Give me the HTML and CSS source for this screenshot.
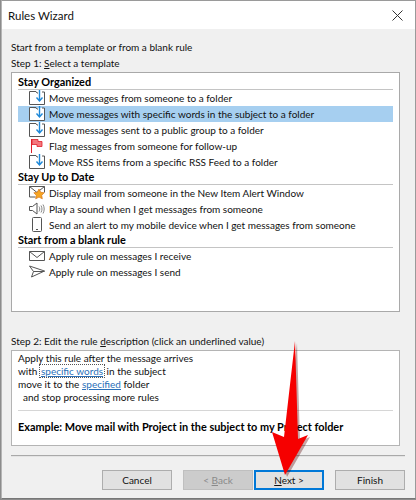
FILE: index.html
```html
<!DOCTYPE html>
<html lang="en">
<head>
    <meta charset="UTF-8">
    <meta name="viewport" content="width=device-width, initial-scale=1.0">
    <title>Rules Wizard</title>
    <link rel="stylesheet" href="styles.css">
</head>
<body>
    <svg width="0" height="0" class="defs">
        <defs>
            <g id="folderMove">
                <path d="M0.500 1.500h6.500l1 1.500h1M0.500 1.500v13h15v-12.500h-2.500" fill="#fff" stroke="#555"/>
                <path d="M10.500 0v10.500M7.500 7.500l3 3.500 3-3.500" fill="none" stroke="#1e88d8" stroke-width="1.400"/>
            </g>
        </defs>
    </svg>

    <div class="window">
        <div class="title-bar">
            <span class="title">Rules Wizard</span>
            <svg class="close" width="11" height="11" viewBox="0 0 11 11">
                <path d="M0.500 0.500l10 10M10.500 0.500l-10 10" stroke="#333" fill="none"/>
            </svg>
        </div>

        <div class="client">
            <div class="intro">Start from a template or from a blank rule</div>
            <div class="step-label">Step 1: <u>S</u>elect a template</div>

            <div class="template-list">
                <div class="group">Stay Organized</div>
                <div class="item"><svg class="icon" viewBox="0 0 18 16"><use href="#folderMove"/></svg>Move messages from someone to a folder</div>
                <div class="item selected"><svg class="icon" viewBox="0 0 18 16"><use href="#folderMove"/></svg>Move messages with specific words in the subject to a folder</div>
                <div class="item"><svg class="icon" viewBox="0 0 18 16"><use href="#folderMove"/></svg>Move messages sent to a public group to a folder</div>
                <div class="item">
                    <svg class="icon" viewBox="0 0 18 16">
                        <path d="M2.500 1v14" stroke="#e0202a" fill="none"/>
                        <path d="M3 1.500h6v2h4v5h-5v-2h-5z" fill="#f4777d" stroke="#e0202a" stroke-width="0.800"/>
                    </svg>Flag messages from someone for follow-up
                </div>
                <div class="item"><svg class="icon" viewBox="0 0 18 16"><use href="#folderMove"/></svg>Move RSS items from a specific RSS Feed to a folder</div>

                <div class="group">Stay Up to Date</div>
                <div class="item">
                    <svg class="icon" viewBox="0 0 18 16">
                        <path d="M0.500 1.500h15v6M0.500 1.500v10.500h6M0.500 1.500l7.500 6 7.500-6" fill="#fff" stroke="#555"/>
                        <path d="M10 4l1.700 3.300 3.500 0.500-2.500 2.500 0.600 3.500-3.300-1.700-3.300 1.700 0.600-3.500-2.500-2.500 3.500-0.500z" fill="#f6a623" stroke="#d9761a" stroke-width="0.700"/>
                    </svg>Display mail from someone in the New Item Alert Window
                </div>
                <div class="item">
                    <svg class="icon" viewBox="0 0 18 16">
                        <path d="M0.500 5.500h3l4.500-3.500v11l-4.500-3.500h-3z" fill="#fff" stroke="#555"/>
                        <path d="M10 5.500c1 1.600 1 3.400 0 5M12 4.500c1.300 2.200 1.300 4.800 0 7M14 3.500c1.600 2.800 1.600 6.200 0 9" fill="none" stroke="#888"/>
                    </svg>Play a sound when I get messages from someone
                </div>
                <div class="item">
                    <svg class="icon" viewBox="0 0 18 16">
                        <rect x="3.500" y="0.500" width="9" height="14" rx="1" fill="#fff" stroke="#555"/>
                        <path d="M7 12.500h2" stroke="#555"/>
                    </svg>Send an alert to my mobile device when I get messages from someone
                </div>

                <div class="group">Start from a blank rule</div>
                <div class="item">
                    <svg class="icon" viewBox="0 0 18 16">
                        <path d="M0.500 3.500h15v9h-15zM0.500 3.500l7.500 6 7.500-6" fill="#fff" stroke="#555"/>
                    </svg>Apply rule on messages I receive
                </div>
                <div class="item">
                    <svg class="icon" viewBox="0 0 18 16">
                        <path d="M0.500 2l15 5-13 6 2-5.500zM4.500 7.500h11" fill="#fff" stroke="#555"/>
                    </svg>Apply rule on messages I send
                </div>
            </div>

            <div class="step-label step-two">Step 2: Edit the rule <u>d</u>escription (click an underlined value)</div>

            <div class="description">
                <div class="desc-line">Apply this rule after the message arrives</div>
                <div class="desc-line">with <a class="value focused">specific words</a> in the subject</div>
                <div class="desc-line">move it to the <a class="value">specified</a> folder</div>
                <div class="desc-line indent">and stop processing more rules</div>
                <div class="desc-rule"></div>
                <div class="example">Example: Move mail with Project in the subject to my Project folder</div>
            </div>

            <div class="separator"></div>

            <div class="buttons">
                <button class="btn">Cancel</button>
                <div class="nav-pair">
                    <button class="btn disabled">&lt; <u>B</u>ack</button>
                    <button class="btn default"><u>N</u>ext &gt;</button>
                </div>
                <button class="btn">Finish</button>
            </div>
        </div>

        <!-- annotation arrow -->
        <svg class="arrow" width="60" height="150" viewBox="0 0 60 150">
            <path d="M26 2L29 100L39 96L16 136L3 93L15 98Z" fill="#5a0000" opacity="0.350" transform="translate(1 1)"/>
            <path d="M25 1L28 99L38 95L15 135L2 92L14 97Z" fill="#f60000"/>
        </svg>
    </div>
</body>
</html>
```

FILE: styles.css
```css
body {
    margin: 0;
    background: #8c8c8c;
    font-family: Lato, "Open Sans", sans-serif;
    font-size: 10px;
    color: #111;
}
.defs {
    position: absolute;
}
.window {
    position: relative;
    box-sizing: border-box;
    width: 415px;
    height: 499px;
    margin-left: 1px;
    border-top: 1px solid #9a9a9a;
    border-right: 1px solid #9a9a9a;
    border-bottom: 1px solid #777;
    border-left: 1px solid #b5b5b5;
    background: #f0f0f0;
    overflow: hidden;
}
.title-bar {
    display: flex;
    align-items: center;
    justify-content: space-between;
    height: 28px;
    padding: 0 12px 0 6px;
    background: #fff;
}
.title {
    font-size: 11.5px;
}
.client {
    padding: 10px 9px 0 9px;
}
.intro {
    line-height: 16px;
}
.step-label {
    line-height: 16px;
}
.template-list {
    box-sizing: border-box;
    width: 389px;
    height: 240px;
    margin-top: 1px;
    padding: 2px 6px;
    background: #fff;
    border: 1px solid #a9a9a9;
}
.group {
    box-sizing: border-box;
    height: 15px;
    border-bottom: 1px solid #c4c4c4;
    font-size: 10.9px;
    font-weight: 700;
    line-height: 14px;
    color: #000;
}
.item {
    display: flex;
    align-items: center;
    height: 16px;
    padding-left: 11px;
    white-space: nowrap;
}
.item.selected {
    background: #a6cff0;
}
.icon {
    flex: none;
    width: 18px;
    height: 16px;
    margin-right: 2px;
}
.step-two {
    margin-top: 21px;
    margin-bottom: 1px;
}
.description {
    box-sizing: border-box;
    width: 389px;
    height: 96px;
    padding: 1px 6px;
    background: #fff;
    border: 1px solid #b4b4b4;
}
.desc-line {
    height: 13px;
    line-height: 13px;
    white-space: nowrap;
}
.indent {
    padding-left: 5px;
}
.value {
    color: #2a6fb8;
    text-decoration: underline;
}
.focused {
    outline: 1px dotted #555;
    padding: 0 1px;
}
.desc-rule {
    height: 1px;
    margin-top: 6px;
    border-top: 1px solid #d6d6d6;
}
.example {
    margin-top: 8px;
    font-size: 10.9px;
    line-height: 14px;
    font-weight: 700;
    color: #000;
    white-space: nowrap;
}
.separator {
    width: 394px;
    margin-top: 9px;
    border-top: 1px solid #a9a9a9;
    border-bottom: 1px solid #e4e4e4;
}
.buttons {
    display: flex;
    justify-content: flex-end;
    gap: 11px;
    width: 394px;
    margin-top: 13px;
}
.nav-pair {
    display: flex;
    gap: 1px;
}
.btn {
    box-sizing: border-box;
    width: 70px;
    height: 20px;
    padding: 0;
    font-family: inherit;
    font-size: 10px;
    color: #111;
    background: #e1e1e1;
    border: 1px solid #adadad;
}
.btn.disabled {
    color: #8a8a8a;
    background: #ccc;
    border-color: #bfbfbf;
}
.btn.default {
    border: 2px solid #0078d7;
}
.close {
    display: block;
}
.arrow {
    position: absolute;
    left: 268px;
    top: 339px;
}
```
